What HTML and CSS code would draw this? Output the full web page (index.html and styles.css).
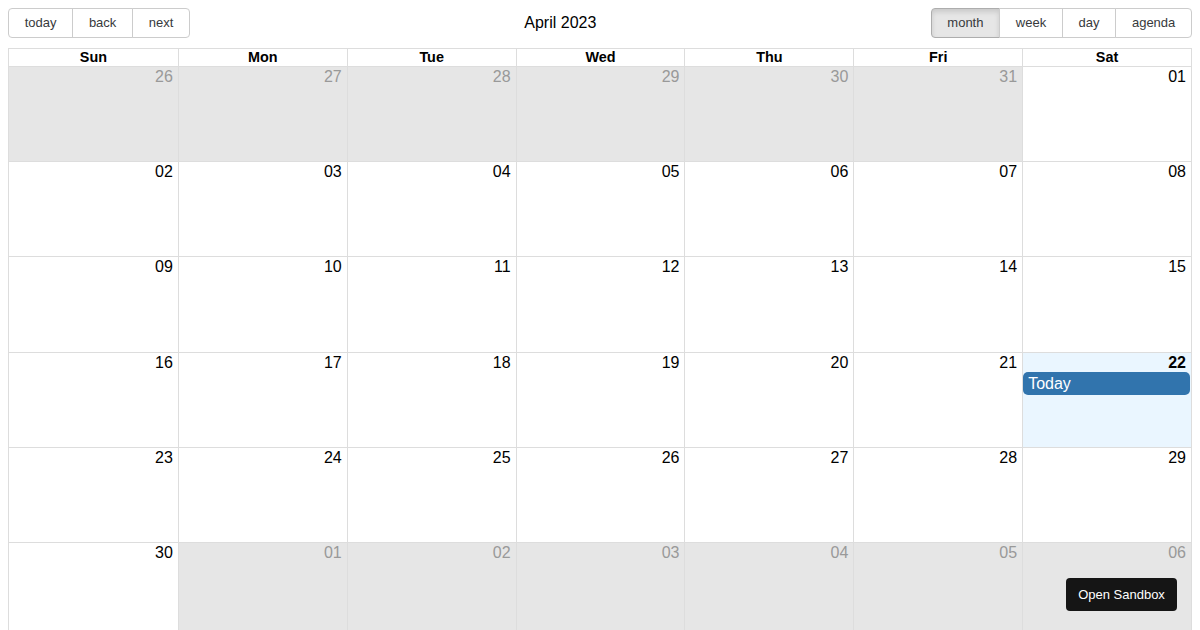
FILE: index.html
```html
<!DOCTYPE html>
<html>
<head>
<meta charset="utf-8">
<link rel="stylesheet" href="styles.css">
</head>
<body>
<div class="calendar">
  <div class="toolbar">
    <div class="btn-group">
      <button class="btn">today</button>
      <button class="btn">back</button>
      <button class="btn">next</button>
    </div>
    <div class="label">April 2023</div>
    <div class="btn-group">
      <button class="btn active">month</button>
      <button class="btn">week</button>
      <button class="btn">day</button>
      <button class="btn">agenda</button>
    </div>
  </div>
  <div class="month">
    <div class="header-row">
      <div class="header">Sun</div><div class="header">Mon</div><div class="header">Tue</div><div class="header">Wed</div><div class="header">Thu</div><div class="header">Fri</div><div class="header">Sat</div>
    </div>
    <div class="week">
      <div class="cell off"><span class="date">26</span></div>
      <div class="cell off"><span class="date">27</span></div>
      <div class="cell off"><span class="date">28</span></div>
      <div class="cell off"><span class="date">29</span></div>
      <div class="cell off"><span class="date">30</span></div>
      <div class="cell off"><span class="date">31</span></div>
      <div class="cell"><span class="date">01</span></div>
    </div>
    <div class="week">
      <div class="cell"><span class="date">02</span></div>
      <div class="cell"><span class="date">03</span></div>
      <div class="cell"><span class="date">04</span></div>
      <div class="cell"><span class="date">05</span></div>
      <div class="cell"><span class="date">06</span></div>
      <div class="cell"><span class="date">07</span></div>
      <div class="cell"><span class="date">08</span></div>
    </div>
    <div class="week">
      <div class="cell"><span class="date">09</span></div>
      <div class="cell"><span class="date">10</span></div>
      <div class="cell"><span class="date">11</span></div>
      <div class="cell"><span class="date">12</span></div>
      <div class="cell"><span class="date">13</span></div>
      <div class="cell"><span class="date">14</span></div>
      <div class="cell"><span class="date">15</span></div>
    </div>
    <div class="week">
      <div class="cell"><span class="date">16</span></div>
      <div class="cell"><span class="date">17</span></div>
      <div class="cell"><span class="date">18</span></div>
      <div class="cell"><span class="date">19</span></div>
      <div class="cell"><span class="date">20</span></div>
      <div class="cell"><span class="date">21</span></div>
      <div class="cell today"><span class="date current">22</span><div class="event">Today</div></div>
    </div>
    <div class="week">
      <div class="cell"><span class="date">23</span></div>
      <div class="cell"><span class="date">24</span></div>
      <div class="cell"><span class="date">25</span></div>
      <div class="cell"><span class="date">26</span></div>
      <div class="cell"><span class="date">27</span></div>
      <div class="cell"><span class="date">28</span></div>
      <div class="cell"><span class="date">29</span></div>
    </div>
    <div class="week">
      <div class="cell"><span class="date">30</span></div>
      <div class="cell off"><span class="date">01</span></div>
      <div class="cell off"><span class="date">02</span></div>
      <div class="cell off"><span class="date">03</span></div>
      <div class="cell off"><span class="date">04</span></div>
      <div class="cell off"><span class="date">05</span></div>
      <div class="cell off"><span class="date">06</span></div>
    </div>
  </div>
</div>
<a class="sandbox-btn">Open Sandbox</a>
</body>
</html>
```
FILE: styles.css
```css
* { box-sizing: border-box; }
html, body { margin: 0; padding: 0; background: #fff; }
body {
  padding: 8px;
  font-family: "Liberation Sans", Arial, sans-serif;
  font-size: 16px;
  color: #000;
  overflow: hidden;
}
.toolbar {
  display: flex;
  align-items: center;
  margin-bottom: 10px;
  height: 30px;
}
.btn-group {
  display: inline-flex;
}
.btn {
  font-family: "Liberation Sans", Arial, sans-serif;
  font-size: 13px;
  line-height: 16px;
  color: #373a3c;
  background: #fff;
  border: 1px solid #ccc;
  padding: 6px 15.7px;
  margin: 0;
  border-radius: 0;
  height: 30px;
}
.btn + .btn { margin-left: -1px; }
.btn:first-child { border-radius: 4px 0 0 4px; }
.btn:last-child { border-radius: 0 4px 4px 0; }
.btn.active {
  background: #e6e6e6;
  border-color: #adadad;
  box-shadow: inset 0 3px 5px rgba(0,0,0,0.125);
}
.label {
  flex: 1;
  text-align: center;
  padding: 0 10px;
  font-size: 16px;
  color: #000;
}
.month {
  height: 590px;
  border: 1px solid #ddd;
  display: flex;
  flex-direction: column;
}
.header-row {
  display: grid;
  grid-template-columns: repeat(7, 1fr);
  border-bottom: 1px solid #ddd;
  flex: none;
}
.header {
  height: 17px;
  line-height: 16px;
  font-size: 14.4px;
  font-weight: bold;
  text-align: center;
  padding: 0 3px;
}
.header + .header { border-left: 1px solid #ddd; }
.week {
  flex: 1;
  display: grid;
  grid-template-columns: repeat(7, 1fr);
  min-height: 0;
}
.week + .week { border-top: 1px solid #ddd; }
.cell {
  display: flex;
  flex-direction: column;
  min-width: 0;
}
.cell + .cell { border-left: 1px solid #ddd; }
.cell.off { background: #e6e6e6; }
.cell.off .date { color: #999; }
.cell.today { background: #eaf6ff; }
.date {
  display: block;
  text-align: right;
  padding-right: 5px;
  line-height: 19px;
  font-size: 16px;
  color: #000;
}
.date.current { font-weight: bold; }
.event {
  margin: 0 1px 1px 0;
  background: #3174ad;
  color: #fff;
  border-radius: 5px;
  padding: 2px 5px;
  font-size: 16px;
  line-height: 19px;
}
.sandbox-btn {
  position: fixed;
  right: 23px;
  bottom: 19px;
  background: #151515;
  color: #fff;
  font-family: "Liberation Sans", Arial, sans-serif;
  font-size: 13px;
  line-height: 33px;
  height: 33px;
  width: 111px;
  text-align: center;
  border-radius: 4px;
}
```
